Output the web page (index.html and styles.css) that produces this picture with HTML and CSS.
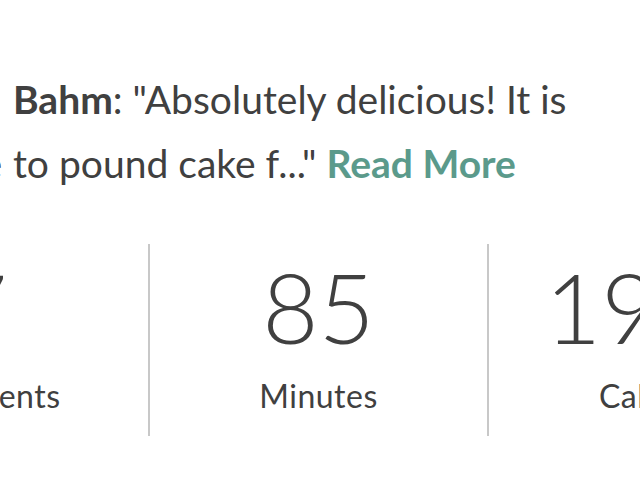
FILE: index.html
```html
<!DOCTYPE html>
<html lang="en">
<head>
    <meta charset="UTF-8">
    <meta name="viewport" content="width=device-width, initial-scale=1.0">
    <title>Pound Cake Recipe</title>
    <link rel="stylesheet" href="styles.css">
</head>
<body>
    <div class="recipe">
        <p class="review">
            <span class="line"><span class="cut cut-far">Jan</span> <strong>Bahm</strong>: "Absolutely delicious! It is</span>
            <span class="line"><span class="cut">close</span> to pound cake f..." <a href="#" class="read-more">Read More</a></span>
        </p>
        <div class="stats">
            <div class="stat">
                <span class="stat-value">7</span>
                <span class="stat-label">Ingredients</span>
            </div>
            <div class="stat">
                <span class="stat-value">85</span>
                <span class="stat-label">Minutes</span>
            </div>
            <div class="stat">
                <span class="stat-value">1960</span>
                <span class="stat-label">Calories</span>
            </div>
        </div>
    </div>
</body>
</html>
```

FILE: styles.css
```css
body {
    font-family: Lato, "Open Sans", sans-serif;
    margin: 0;
    background-color: #fff;
    color: #404040;
    overflow: hidden;
}
.recipe {
    width: 640px;
    height: 479px;
    overflow: hidden;
}
.review {
    margin: 0;
    padding: 67px 0 0 3px;
    font-size: 39px;
    line-height: 64px;
    white-space: nowrap;
}
.review .line {
    display: block;
}
.review .cut {
    display: inline-block;
    width: 120px;
    padding-right: 1px;
    margin-left: -121px;
    text-align: right;
}
.review .cut-far {
    padding-right: 12px;
    margin-left: -132px;
}
.review strong {
    font-weight: 700;
}
.read-more {
    color: #5b9a8b;
    font-weight: 700;
    text-decoration: none;
}
.stats {
    display: flex;
    margin: 49px 0 0 -189px;
    width: 1011px;
}
.stat {
    flex: 0 0 337px;
    display: flex;
    flex-direction: column;
    align-items: center;
    padding: 8px 0 15px;
}
.stat + .stat {
    border-left: 2px solid #c8c8c8;
}
.stat-value {
    font-size: 97px;
    font-weight: 300;
    line-height: 110px;
}
.stat-label {
    font-size: 32px;
    line-height: 50px;
    margin-top: 9px;
    letter-spacing: 0.5px;
}
```
